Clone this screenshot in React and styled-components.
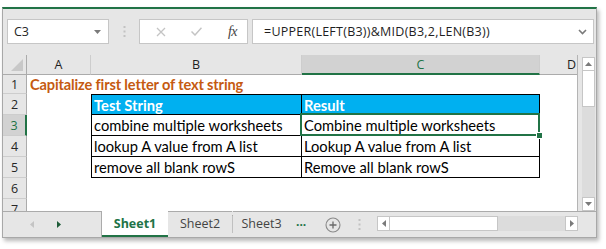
import React from 'react';
import styled, { createGlobalStyle } from 'styled-components';

const GlobalStyle = createGlobalStyle`
  html, body {
    margin: 0;
    background: #ffffff;
  }
  body {
    font-family: 'Open Sans', 'Noto Sans', sans-serif;
  }
`;

const GREEN = '#217346';

const Page = styled.div`
  width: 606px;
  height: 249px;
  padding: 7px 0 0 2px;
  box-sizing: border-box;
`;

const Window = styled.div`
  width: 595px;
  height: 231px;
  box-sizing: border-box;
  display: flex;
  flex-direction: column;
  background: #e6e6e6;
  border: 1px solid #a8a8a8;
  border-top: 2px solid ${GREEN};
  box-shadow: 2px 3px 4px rgba(0, 0, 0, 0.28);
  overflow: hidden;
`;

/* ---------- formula bar ---------- */
const FormulaBar = styled.div`
  height: 46px;
  flex: none;
  display: flex;
  align-items: flex-start;
  padding: 10px 2px 0 4px;
  box-sizing: border-box;
`;

const Box = styled.div`
  height: 25px;
  box-sizing: border-box;
  background: #ffffff;
  border: 1px solid #c6c6c6;
  display: flex;
  align-items: center;
`;

const NameBox = styled(Box)`
  width: 102px;
  padding: 0 7px 0 6px;
  justify-content: space-between;
  font-size: 12.5px;
  color: #262626;
`;

const Grip = styled.div`
  width: ${p => p.$w || 30}px;
  flex: none;
  height: 25px;
  display: flex;
  align-items: center;
  justify-content: center;
`;

const FxBox = styled(Box)`
  width: 109px;
  padding: 0 10px 0 16px;
  justify-content: space-between;
`;

const FxLabel = styled.span`
  font-family: 'Liberation Serif', serif;
  font-style: italic;
  font-size: 14px;
  color: #444;
  letter-spacing: -0.5px;
`;

const FormulaInput = styled(Box)`
  flex: 1;
  margin-left: 4px;
  padding: 0 6px 0 11px;
  justify-content: space-between;
  font-size: 12.5px;
  letter-spacing: 0.25px;
  color: #1f1f1f;
`;

/* ---------- sheet ---------- */
const SheetArea = styled.div`
  flex: none;
  height: 156px;
  display: flex;
`;

const Cells = styled.div`
  width: 575px;
  flex: none;
  box-sizing: border-box;
  border-right: 1px solid #b4b4b4;
  background: #ffffff;
  overflow: hidden;
  display: grid;
  grid-template-columns: 24px 64px 211px 238px 64px;
  grid-template-rows: 20px 19px 21px 21px 21px 21px 21px 21px;
`;

const Corner = styled.div`
  background: #e6e6e6;
  border-right: 1px solid #ababab;
  border-bottom: 1px solid #ababab;
  box-sizing: border-box;
  display: flex;
  align-items: flex-end;
  justify-content: flex-end;
  padding: 0 3px 3px 0;
`;

const ColHead = styled.div`
  background: ${p => (p.$active ? '#d2d2d2' : '#e6e6e6')};
  border-right: 1px solid #cdcdcd;
  border-bottom: ${p => (p.$active ? `2px solid ${GREEN}` : '1px solid #ababab')};
  box-sizing: border-box;
  display: flex;
  align-items: center;
  justify-content: center;
  font-size: 12.5px;
  color: ${p => (p.$active ? GREEN : '#1e1e1e')};
`;

const RowHead = styled.div`
  grid-column: 1;
  grid-row: ${p => p.$row};
  background: ${p => (p.$active ? '#d2d2d2' : '#e6e6e6')};
  border-right: ${p => (p.$active ? `2px solid ${GREEN}` : '1px solid #ababab')};
  border-bottom: 1px solid #cdcdcd;
  box-sizing: border-box;
  display: flex;
  align-items: center;
  justify-content: center;
  font-size: 12.5px;
  color: ${p => (p.$active ? GREEN : '#262626')};
`;

const Title = styled.div`
  grid-column: 2 / 6;
  grid-row: 2;
  padding-left: 3px;
  font-family: Lato, 'Liberation Sans', sans-serif;
  font-weight: 700;
  font-size: 14.6px;
  letter-spacing: -0.15px;
  line-height: 19px;
  color: #c55a11;
  white-space: nowrap;
`;

const Table = styled.div`
  grid-column: 3 / 5;
  grid-row: 3 / 7;
  display: grid;
  grid-template-columns: 210px 238px;
  grid-template-rows: 20px 21px 21px 21px;
  border-top: 1px solid #000;
  border-left: 1px solid #000;
  font-family: Lato, 'Liberation Sans', sans-serif;
  font-size: 14.7px;
`;

const Cell = styled.div`
  position: relative;
  box-sizing: border-box;
  border-right: 1px solid #000;
  border-bottom: 1px solid #000;
  padding-left: 2px;
  line-height: 20px;
  white-space: nowrap;
  color: ${p => (p.$head ? '#ffffff' : '#000000')};
  background: ${p => (p.$head ? '#00b0f0' : '#ffffff')};
  font-weight: ${p => (p.$head ? 700 : 400)};
`;

const Selection = styled.div`
  position: absolute;
  top: -2px;
  left: -2px;
  right: -1px;
  bottom: -1px;
  border: 2px solid ${GREEN};
  z-index: 1;
`;

const FillHandle = styled.div`
  position: absolute;
  right: -5px;
  bottom: -5px;
  width: 5px;
  height: 5px;
  background: ${GREEN};
  border: 1px solid #ffffff;
`;

const VScroll = styled.div`
  width: 18px;
  flex: none;
  display: flex;
  flex-direction: column;
  align-items: flex-end;
  padding: 2px 1px 0 0;
  box-sizing: border-box;
`;

const ArrowBox = styled.div`
  width: 13px;
  height: 14px;
  flex: none;
  box-sizing: border-box;
  background: #ffffff;
  border: 1px solid #c6c6c6;
  display: flex;
  align-items: center;
  justify-content: center;
`;

const VThumb = styled.div`
  width: 13px;
  height: 36px;
  flex: none;
  box-sizing: border-box;
  background: #ffffff;
  border: 1px solid #c6c6c6;
  border-top: none;
`;

const VTrack = styled.div`
  flex: 1;
  width: 13px;
  background: #dcdcdc;
`;

/* ---------- sheet tabs ---------- */
const TabBar = styled.div`
  flex: 1;
  display: flex;
  align-items: stretch;
`;

const Nav = styled.div`
  width: 99px;
  flex: none;
  box-sizing: border-box;
  border-top: 1px solid #ababab;
  border-right: 1px solid #ababab;
  display: flex;
  align-items: center;
  padding-left: 27px;
  gap: 23px;
`;

const Tab = styled.div`
  width: ${p => p.$w}px;
  flex: none;
  box-sizing: border-box;
  display: flex;
  align-items: center;
  justify-content: center;
  font-size: 12.5px;
  background: ${p => (p.$active ? '#ffffff' : 'transparent')};
  color: ${p => (p.$active ? GREEN : '#444')};
  font-weight: ${p => (p.$active ? 700 : 400)};
  border-top: ${p => (p.$active ? 'none' : '1px solid #ababab')};
  border-bottom: ${p => (p.$active ? `2px solid ${GREEN}` : 'none')};
  padding-bottom: ${p => (p.$active ? '0' : '2px')};
`;

const TabDivider = styled.div`
  width: 1px;
  flex: none;
  background: #c0c0c0;
  margin: 4px 0 4px;
  border-top: 1px solid #ababab;
`;

const Rest = styled.div`
  flex: 1;
  box-sizing: border-box;
  border-top: 1px solid #ababab;
  display: flex;
  align-items: center;
  padding-right: 18px;
`;

const More = styled.span`
  width: 12px;
  flex: none;
  color: ${GREEN};
  font-weight: 700;
  font-size: 12px;
  margin: -6px 17px 0 6px;
`;

const HScroll = styled.div`
  flex: 1;
  height: 15px;
  display: flex;
  margin-top: -2px;
`;

const HArrow = styled(ArrowBox)`
  width: 13px;
  height: 15px;
`;

const HThumb = styled.div`
  width: 108px;
  flex: none;
  box-sizing: border-box;
  background: #ffffff;
  border: 1px solid #c6c6c6;
  border-left: none;
`;

const HTrack = styled.div`
  flex: 1;
  background: #dcdcdc;
`;

const GripDots = () => (
  <svg width="3" height="11" viewBox="0 0 3 11">
    <rect x="0.5" y="0" width="2" height="2" fill="#c2c2c2" />
    <rect x="0.5" y="4.5" width="2" height="2" fill="#c2c2c2" />
    <rect x="0.5" y="9" width="2" height="2" fill="#c2c2c2" />
  </svg>
);

const rows = [
  ['combine multiple worksheets', 'Combine multiple worksheets'],
  ['lookup A value from A list', 'Lookup A value from A list'],
  ['remove all blank rowS', 'Remove all blank rowS'],
];

export default function App() {
  return (
    <Page>
      <GlobalStyle />
      <Window>
        <FormulaBar>
          <NameBox>
            <span>C3</span>
            <svg width="7" height="4" viewBox="0 0 7 4">
              <path d="M0 0 L7 0 L3.5 4 Z" fill="#7a7a7a" />
            </svg>
          </NameBox>
          <Grip>
            <GripDots />
          </Grip>
          <FxBox>
            <svg width="10" height="10" viewBox="0 0 10 10">
              <path d="M1 1 L9 9 M9 1 L1 9" stroke="#c4c4c4" strokeWidth="1.3" />
            </svg>
            <svg width="11" height="9" viewBox="0 0 11 9">
              <path d="M0.5 4.5 L4 8 L10.5 0.8" stroke="#c4c4c4" strokeWidth="1.5" fill="none" />
            </svg>
            <FxLabel>fx</FxLabel>
          </FxBox>
          <FormulaInput>
            <span>=UPPER(LEFT(B3))&amp;MID(B3,2,LEN(B3))</span>
            <svg width="9" height="6" viewBox="0 0 9 6">
              <path d="M1 1 L4.5 4.5 L8 1" stroke="#7a7a7a" strokeWidth="1.6" fill="none" />
            </svg>
          </FormulaInput>
        </FormulaBar>

        <SheetArea>
          <Cells>
            <Corner>
              <svg width="12" height="12" viewBox="0 0 12 12">
                <path d="M12 0 L12 12 L0 12 Z" fill="#c8c8c8" />
              </svg>
            </Corner>
            <ColHead>A</ColHead>
            <ColHead>B</ColHead>
            <ColHead $active>C</ColHead>
            <ColHead>D</ColHead>

            {[1, 2, 3, 4, 5, 6, 7].map(n => (
              <RowHead key={n} $row={n + 1} $active={n === 3}>
                {n}
              </RowHead>
            ))}

            <Title>Capitalize first letter of text string</Title>

            <Table>
              <Cell $head>Test String</Cell>
              <Cell $head>Result</Cell>
              {rows.map(([src, res], i) => (
                <React.Fragment key={src}>
                  <Cell>{src}</Cell>
                  <Cell>
                    {res}
                    {i === 0 && (
                      <Selection>
                        <FillHandle />
                      </Selection>
                    )}
                  </Cell>
                </React.Fragment>
              ))}
            </Table>
          </Cells>

          <VScroll>
            <ArrowBox>
              <svg width="7" height="4" viewBox="0 0 7 4">
                <path d="M0 4 L7 4 L3.5 0 Z" fill="#7a7a7a" />
              </svg>
            </ArrowBox>
            <VThumb />
            <VTrack />
            <ArrowBox>
              <svg width="7" height="4" viewBox="0 0 7 4">
                <path d="M0 0 L7 0 L3.5 4 Z" fill="#7a7a7a" />
              </svg>
            </ArrowBox>
          </VScroll>
        </SheetArea>

        <TabBar>
          <Nav>
            <svg width="4" height="7" viewBox="0 0 4 7">
              <path d="M4 0 L4 7 L0 3.5 Z" fill="#c4c4c4" />
            </svg>
            <svg width="4" height="7" viewBox="0 0 4 7">
              <path d="M0 0 L0 7 L4 3.5 Z" fill="#1e5c38" />
            </svg>
          </Nav>
          <Tab $w={66} $active>Sheet1</Tab>
          <Tab $w={64}>Sheet2</Tab>
          <TabDivider />
          <Tab $w={57}>Sheet3</Tab>
          <Rest>
            <More>...</More>
            <svg width="16" height="16" viewBox="0 0 16 16">
              <circle cx="8" cy="8" r="7" stroke="#8a8a8a" strokeWidth="1.1" fill="none" />
              <path d="M8 4.5 V11.5 M4.5 8 H11.5" stroke="#6a6a6a" strokeWidth="1.3" />
            </svg>
            <Grip $w={36}>
              <GripDots />
            </Grip>
            <HScroll>
              <HArrow>
                <svg width="4" height="7" viewBox="0 0 4 7">
                  <path d="M4 0 L4 7 L0 3.5 Z" fill="#7a7a7a" />
                </svg>
              </HArrow>
              <HThumb />
              <HTrack />
              <HArrow>
                <svg width="4" height="7" viewBox="0 0 4 7">
                  <path d="M0 0 L0 7 L4 3.5 Z" fill="#7a7a7a" />
                </svg>
              </HArrow>
            </HScroll>
          </Rest>
        </TabBar>
      </Window>
    </Page>
  );
}
